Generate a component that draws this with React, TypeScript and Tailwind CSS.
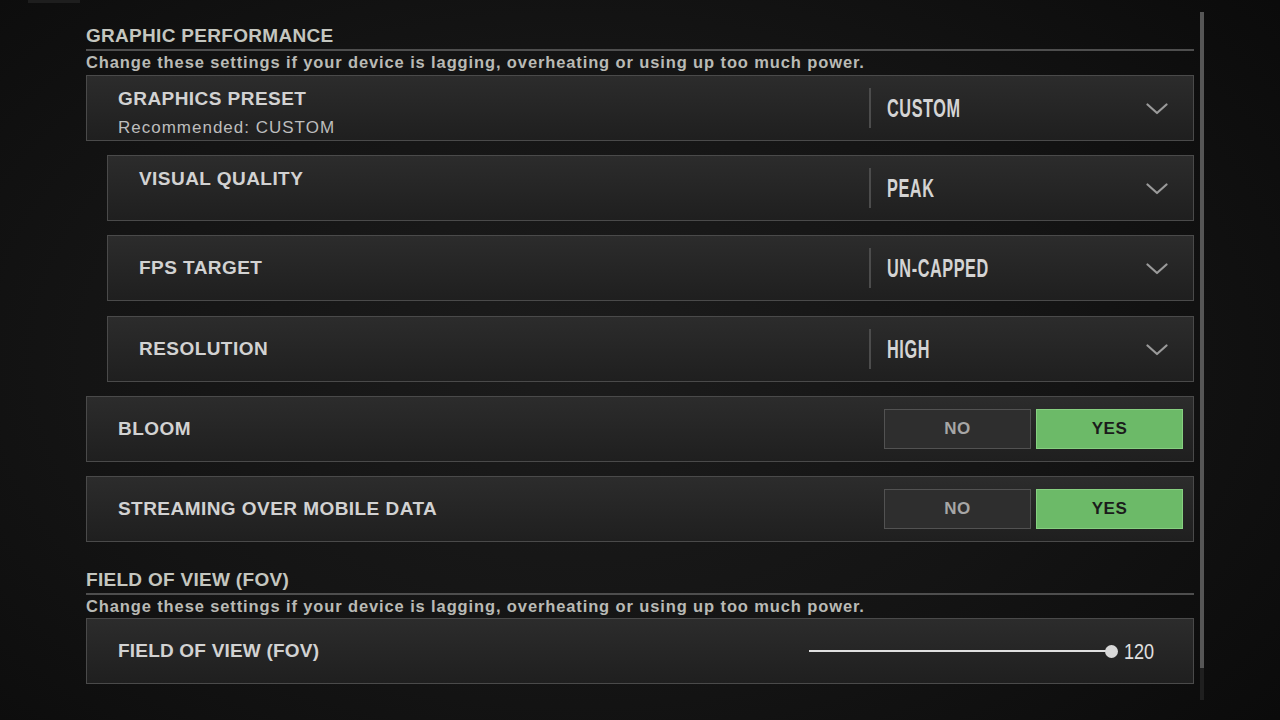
import React from "react";

const labelFont = { fontFamily: '"Liberation Sans", Arial, sans-serif' };

function Chevron() {
  return (
    <svg width="22" height="12" viewBox="0 0 22 12" fill="none">
      <path d="M1.5 1.5 L11 10 L20.5 1.5" stroke="#9a9a9a" strokeWidth="2.2" strokeLinecap="round" strokeLinejoin="round" />
    </svg>
  );
}

function RowBox({ children, indent = false }: { children: React.ReactNode; indent?: boolean }) {
  return (
    <div
      className={`${indent ? "ml-[21px]" : ""} h-[66px] border border-[#4a4a4a] bg-gradient-to-b from-[#2c2c2c] to-[#1f1f1f] flex items-stretch`}
    >
      {children}
    </div>
  );
}

function Dropdown({ label, value, sub, top = false, indent = false }: { label: string; value: string; sub?: string; top?: boolean; indent?: boolean }) {
  return (
    <RowBox indent={indent}>
      <div className={`flex-1 pl-[31px] flex flex-col ${sub || top ? "justify-start pt-[10px]" : "justify-center"}`}>
        <div className="text-[19px] leading-[26px] font-bold text-[#d2d2d2] tracking-[0.45px]">{label}</div>
        {sub && <div className="text-[17px] leading-[24px] text-[#bdbdbd] tracking-[1px] mt-[4px]">{sub}</div>}
      </div>
      <div className="w-[324px] flex items-center">
        <div className="w-[2px] h-[40px] bg-[#4c4c4c]" />
        <div className="flex-1 pl-[16px] pt-[2px] text-[25px] font-bold text-[#d4d4d4] tracking-[0.9px] whitespace-nowrap">
          <span className="inline-block origin-left scale-x-[0.65]">{value}</span>
        </div>
        <div className="pr-[25px] pt-[2px]">
          <Chevron />
        </div>
      </div>
    </RowBox>
  );
}

function Toggle({ label }: { label: string }) {
  return (
    <RowBox>
      <div className="flex-1 pl-[31px] pt-[1px] flex items-center text-[19px] font-bold text-[#d2d2d2] tracking-[0.45px]">{label}</div>
      <div className="flex items-center gap-[5px] pr-[10px]">
        <div className="w-[147px] h-[40px] border border-[#525252] bg-[#2e2e2e] flex items-center justify-center text-[17px] font-bold text-[#a6a6a6] tracking-[0.5px]">
          NO
        </div>
        <div className="w-[147px] h-[40px] border border-[#86cf80] bg-[#6cba68] flex items-center justify-center text-[17px] font-bold text-[#1b1b1b] tracking-[0.5px]">
          YES
        </div>
      </div>
    </RowBox>
  );
}

function SectionHead({ title }: { title: string }) {
  return (
    <>
      <div className="h-[26px] leading-[26px] text-[19px] font-bold text-[#c4c6bf] tracking-[0.3px] border-b-2 border-[#4e4e4e] box-content">
        {title}
      </div>
      <div className="h-[22px] leading-[22px] text-[16.5px] font-bold text-[#b9bab5] tracking-[0.88px] whitespace-nowrap">
        Change these settings if your device is lagging, overheating or using up too much power.
      </div>
    </>
  );
}

export default function App() {
  return (
    <div
      className="relative w-[1280px] h-[720px] overflow-hidden bg-[radial-gradient(ellipse_70%_80%_at_45%_50%,#1c1c1c_0%,#141414_55%,#0b0b0b_100%)]"
      style={labelFont}
    >
      <div className="absolute left-[28px] top-0 w-[52px] h-[3px] bg-[#1e1e1e]" />
      <div className="absolute left-[1200px] top-[12px] w-[4px] h-[656px] bg-[#565656]" />
      <div className="absolute left-[1200px] top-[668px] w-[4px] h-[32px] bg-[#1f1f1f]" />

      <div className="ml-[86px] w-[1108px] pt-[23px]">
        <SectionHead title="GRAPHIC PERFORMANCE" />
        <div className="flex flex-col gap-[14px] mt-[2px]">
          <Dropdown label="GRAPHICS PRESET" sub="Recommended: CUSTOM" value="CUSTOM" />
          <Dropdown label="VISUAL QUALITY" value="PEAK" indent top />
          <Dropdown label="FPS TARGET" value="UN-CAPPED" indent />
          <div className="mt-[1px]">
            <Dropdown label="RESOLUTION" value="HIGH" indent />
          </div>
          <Toggle label="BLOOM" />
          <Toggle label="STREAMING OVER MOBILE DATA" />
        </div>

        <div className="mt-[25px]">
          <SectionHead title="FIELD OF VIEW (FOV)" />
        </div>
        <div className="mt-[1px]">
          <RowBox>
            <div className="flex-1 pl-[31px] flex items-center text-[19px] font-bold text-[#d2d2d2] tracking-[0.2px]">
              FIELD OF VIEW (FOV)
            </div>
            <div className="flex items-center pr-[38px]">
              <div className="relative w-[302px] h-[14px] flex items-center">
                <div className="w-full h-[2px] bg-[#e0e0e0]" />
                <div className="absolute right-[-7px] top-[1px] w-[13px] h-[13px] rounded-full bg-[#d8d8d8]" />
              </div>
              <div className="ml-[13px] w-[31px] text-[22px] text-[#e0e0e0] whitespace-nowrap">
                <span className="inline-block origin-left scale-x-[0.82]">120</span>
              </div>
            </div>
          </RowBox>
        </div>
      </div>
    </div>
  );
}
